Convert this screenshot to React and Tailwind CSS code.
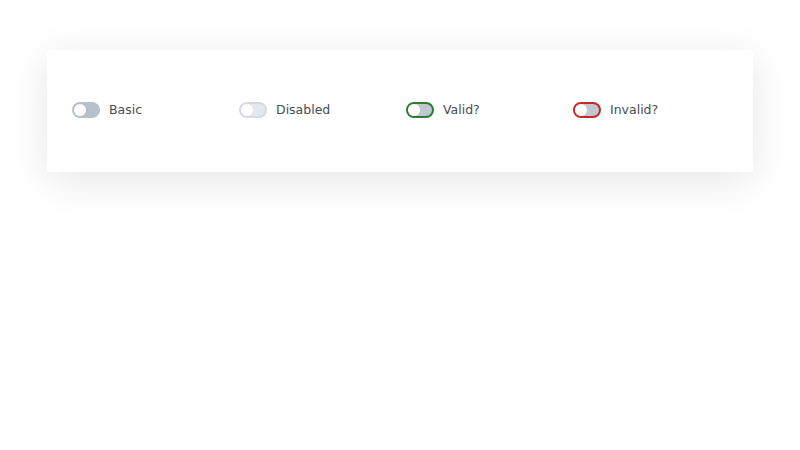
import React from 'react';

const Toggle = ({ label, variant = 'basic' }) => {
  const trackClasses = {
    basic: 'bg-[#b8c0ca] border-[#b8c0ca]',
    disabled: 'bg-[#e4e7eb] border-[#d6dade]',
    valid: 'bg-[#c1c7cf] border-[#2e7d32]',
    invalid: 'bg-[#c1c7cf] border-[#c62828]',
  };
  return (
    <label className="flex shrink-0 items-center gap-[9px] w-[167px]">
      <span className={`relative inline-flex items-center w-[28px] h-[16px] rounded-full border-2 ${trackClasses[variant]}`}>
        <span className="absolute left-[0px] w-[12px] h-[12px] rounded-full bg-white" />
      </span>
      <span className="text-[12.5px] text-[#474d54]">{label}</span>
    </label>
  );
};

export default function App() {
  return (
    <div className="w-[800px] h-[450px] bg-white pt-[50px] px-[47px]" style={{ fontFamily: '"DejaVu Sans", sans-serif' }}>
      <div className="h-[122px] bg-white rounded-[3px] shadow-[0_8px_40px_rgba(0,0,0,0.10)] flex items-center pl-[25px] pb-[2px]">
        <Toggle label="Basic" variant="basic" />
        <Toggle label="Disabled" variant="disabled" />
        <Toggle label="Valid?" variant="valid" />
        <Toggle label="Invalid?" variant="invalid" />
      </div>
    </div>
  );
}
